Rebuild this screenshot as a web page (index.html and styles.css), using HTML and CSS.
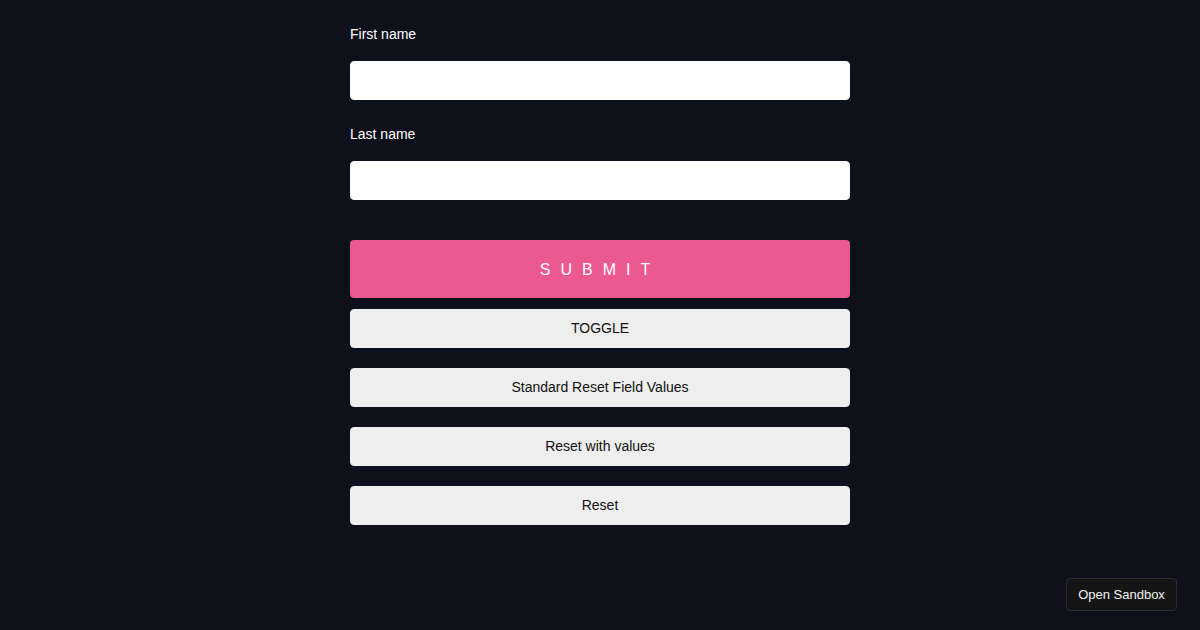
FILE: index.html
```html
<!DOCTYPE html>
<html>
<head>
<meta charset="utf-8">
<link rel="stylesheet" href="styles.css">
</head>
<body>
<form class="form">
  <label class="label">First name</label>
  <input class="field" type="text">
  <label class="label label-next">Last name</label>
  <input class="field" type="text">
  <button class="submit" type="button">Submit</button>
  <button class="btn btn-first" type="button">TOGGLE</button>
  <button class="btn" type="button">Standard Reset Field Values</button>
  <button class="btn" type="button">Reset with values</button>
  <button class="btn" type="button">Reset</button>
</form>
<a class="sandbox">Open Sandbox</a>
</body>
</html>
```
FILE: styles.css
```css
html, body {
  margin: 0;
  padding: 0;
  height: 100%;
}
body {
  background: #0e101c;
  font-family: "Liberation Sans", Arial, sans-serif;
  overflow: hidden;
}
.form {
  width: 500px;
  margin: 0 auto;
  padding-top: 20px;
  display: flex;
  flex-direction: column;
}
.label {
  display: block;
  color: #fff;
  font-size: 14px;
  line-height: 28px;
  height: 28px;
  margin-bottom: 13px;
}
.label-next {
  margin-top: 20px;
}
.field {
  box-sizing: border-box;
  width: 100%;
  height: 39px;
  border-radius: 4px;
  border: 1px solid #fff;
  background: #fff;
  padding: 10px 15px;
  font-size: 14px;
  margin: 0;
}
.submit {
  box-sizing: border-box;
  margin-top: 40px;
  height: 58px;
  border: none;
  border-radius: 4px;
  background: #ec5990;
  color: #fff;
  font-family: "Liberation Sans", Arial, sans-serif;
  font-size: 16px;
  font-weight: 400;
  letter-spacing: 10px;
  text-transform: uppercase;
  padding: 2px 0 0 0;
}
.btn {
  box-sizing: border-box;
  height: 39px;
  margin-top: 20px;
  border: 1px solid #eeeeee;
  border-radius: 4px;
  background: #eeeeee;
  color: #111;
  font-family: "Liberation Sans", Arial, sans-serif;
  font-size: 14px;
  padding: 0 0 2px 0;
}
.btn-first {
  margin-top: 11px;
}
.sandbox {
  position: fixed;
  right: 23px;
  bottom: 19px;
  box-sizing: border-box;
  width: 111px;
  height: 33px;
  display: flex;
  align-items: center;
  justify-content: center;
  background: #151515;
  border: 1px solid #2c2c2c;
  border-radius: 4px;
  color: #f2f2f2;
  font-family: "Liberation Sans", Arial, sans-serif;
  font-size: 13px;
}
```
